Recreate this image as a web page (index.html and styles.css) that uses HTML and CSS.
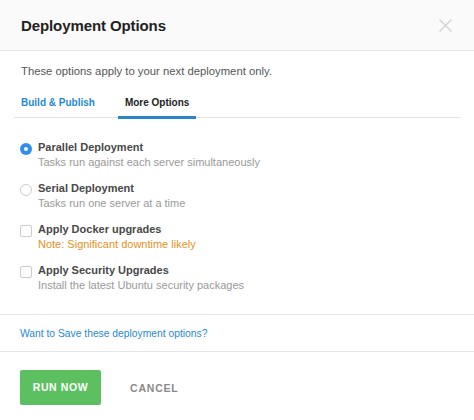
FILE: index.html
```html
<!DOCTYPE html>
<html lang="en">
<head>
    <meta charset="UTF-8">
    <meta name="viewport" content="width=device-width, initial-scale=1.0">
    <title>Deployment Options</title>
    <link rel="stylesheet" href="styles.css">
</head>
<body>
    <div class="modal">
        <div class="modal-header">
            <h1 class="modal-title">Deployment Options</h1>
            <svg class="close" width="13" height="13" viewBox="0 0 13 13">
                <path d="M0.5 0.5 L12.5 12.5 M12.5 0.5 L0.5 12.5" stroke="#cfcfcf" stroke-width="1.2" fill="none"/>
            </svg>
        </div>

        <div class="modal-body">
            <p class="description">These options apply to your next deployment only.</p>

            <div class="tabs">
                <a class="tab">Build &amp; Publish</a>
                <a class="tab active">More Options</a>
            </div>

            <div class="options">
                <div class="option">
                    <span class="radio checked"></span>
                    <div class="option-text">
                        <div class="option-label">Parallel Deployment</div>
                        <div class="option-help">Tasks run against each server simultaneously</div>
                    </div>
                </div>
                <div class="option">
                    <span class="radio"></span>
                    <div class="option-text">
                        <div class="option-label">Serial Deployment</div>
                        <div class="option-help">Tasks run one server at a time</div>
                    </div>
                </div>
                <div class="option">
                    <span class="checkbox"></span>
                    <div class="option-text">
                        <div class="option-label">Apply Docker upgrades</div>
                        <div class="option-help warning">Note: Significant downtime likely</div>
                    </div>
                </div>
                <div class="option">
                    <span class="checkbox"></span>
                    <div class="option-text">
                        <div class="option-label">Apply Security Upgrades</div>
                        <div class="option-help">Install the latest Ubuntu security packages</div>
                    </div>
                </div>
            </div>
        </div>

        <div class="save-row">
            <a class="save-link">Want to Save these deployment options?</a>
        </div>

        <div class="modal-footer">
            <a class="button">Run Now</a>
            <a class="cancel">Cancel</a>
        </div>
    </div>
</body>
</html>
```

FILE: styles.css
```css
* {
    margin: 0;
    padding: 0;
    box-sizing: border-box;
}

body {
    font-family: "Liberation Sans", Arial, sans-serif;
    background-color: #fff;
    color: #333;
}

.modal {
    width: 474px;
    height: 420px;
    background-color: #fff;
}

.modal-header {
    height: 51px;
    background-color: #fafafa;
    border-bottom: 1px solid #e6e6e6;
    display: flex;
    align-items: center;
    justify-content: space-between;
    padding: 0 22px 0 21px;
}

.modal-title {
    font-size: 15px;
    font-weight: 700;
    color: #222;
    letter-spacing: -0.1px;
}

.close {
    width: 13px;
    height: 13px;
}

.modal-body {
    padding: 13px 13px 0 14px;
}

.description {
    font-size: 11.3px;
    color: #555;
    padding-left: 7px;
    line-height: 15px;
}

.tabs {
    display: flex;
    margin-top: 17px;
    border-bottom: 1px solid #e4e4e4;
}

.tab {
    font-size: 10px;
    font-weight: 700;
    color: #1f8ace;
    padding: 0 7px 6px 7px;
    margin-right: 16px;
    border-bottom: 3px solid transparent;
    margin-bottom: -2px;
    line-height: 14px;
}

.tab.active {
    color: #222;
    border-bottom-color: #2a86c9;
}

.options {
    padding: 22px 0 0 6px;
    display: flex;
    flex-direction: column;
    gap: 11px;
}

.option {
    display: flex;
    gap: 6px;
}

.radio,
.checkbox {
    flex: none;
    width: 12px;
    height: 12px;
    margin-top: 3px;
    border: 1px solid #cdcdcd;
    background-color: #fff;
}

.radio {
    border-radius: 50%;
}

.checkbox {
    border-radius: 2px;
}

.radio.checked {
    border: none;
    background-color: #2f8ff0;
    display: flex;
    align-items: center;
    justify-content: center;
}

.radio.checked::after {
    content: "";
    width: 4px;
    height: 4px;
    border-radius: 50%;
    background-color: #fff;
}

.option-label {
    font-size: 11px;
    font-weight: 700;
    color: #484848;
    line-height: 15px;
}

.option-help {
    font-size: 11px;
    color: #999;
    line-height: 15px;
}

.option-help.warning {
    color: #e8901c;
}

.save-row {
    margin-top: 21px;
    border-top: 1px solid #e6e6e6;
    border-bottom: 1px solid #e6e6e6;
    height: 38px;
    display: flex;
    align-items: center;
    padding-left: 20px;
}

.save-link {
    font-size: 10.3px;
    color: #1f8ace;
}

.modal-footer {
    display: flex;
    align-items: center;
    padding: 18px 20px;
    gap: 29px;
}

.button {
    display: inline-block;
    width: 81px;
    height: 35px;
    line-height: 35px;
    text-align: center;
    background-color: #5cbf60;
    color: #fff;
    font-size: 10.5px;
    font-weight: 700;
    letter-spacing: 0.6px;
    text-transform: uppercase;
    border-radius: 2px;
}

.cancel {
    font-size: 10.5px;
    font-weight: 700;
    color: #8a8a8a;
    letter-spacing: 0.8px;
    text-transform: uppercase;
}
```
